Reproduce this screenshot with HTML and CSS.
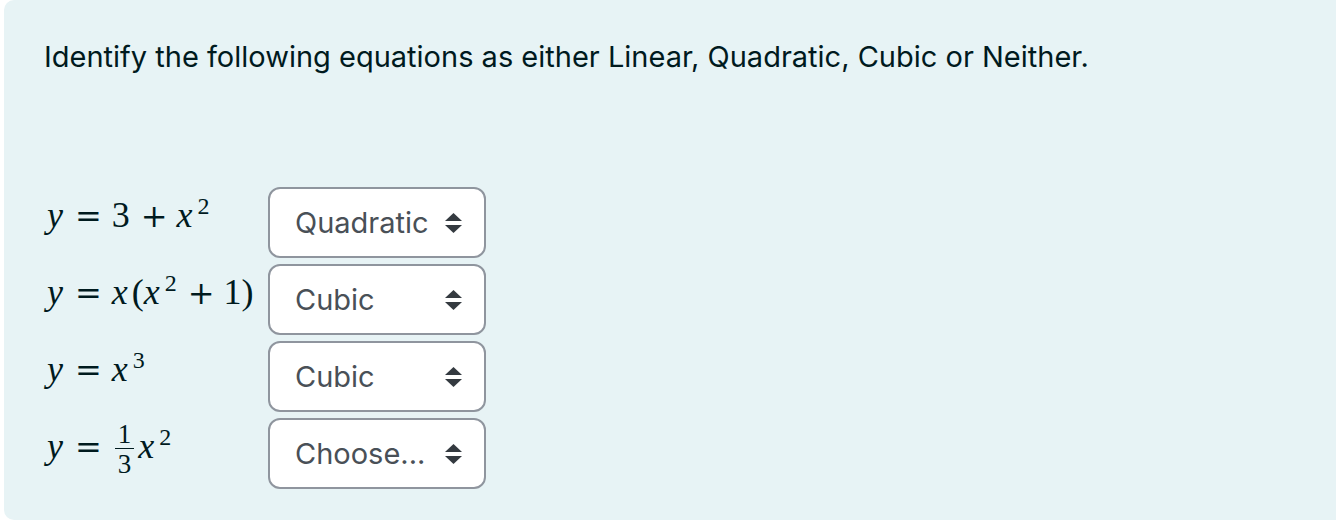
FILE: index.html
```html
<!DOCTYPE html>
<html lang="en">
<head>
    <meta charset="UTF-8">
    <meta name="viewport" content="width=device-width, initial-scale=1.0">
    <title>Question</title>
    <link rel="stylesheet" href="styles.css">
</head>
<body>
    <div class="formulation">
        <p class="qtext">Identify the following equations as either Linear, Quadratic, Cubic or Neither.</p>

        <div class="answers">
            <div class="row">
                <div class="eq">
                    <span class="mi">y</span><span class="mo rel">=</span><span class="mn">3</span><span class="mo bin">+</span><span class="mi">x</span><sup class="sup">2</sup>
                </div>
                <div class="select-wrap">
                    <select class="custom-select">
                        <option>Choose...</option>
                        <option>Linear</option>
                        <option selected>Quadratic</option>
                        <option>Cubic</option>
                        <option>Neither</option>
                    </select>
                    <svg class="caret" width="17" height="20" viewBox="0 0 17 20"><path d="M8.5 0 L17 8 H0 Z M0 12 H17 L8.5 20 Z" fill="#343a40"/></svg>
                </div>
            </div>

            <div class="row">
                <div class="eq">
                    <span class="mi">y</span><span class="mo rel">=</span><span class="mi">x</span><span class="mn">(</span><span class="mi">x</span><sup class="sup">2</sup><span class="mo bin">+</span><span class="mn">1)</span>
                </div>
                <div class="select-wrap">
                    <select class="custom-select">
                        <option>Choose...</option>
                        <option>Linear</option>
                        <option>Quadratic</option>
                        <option selected>Cubic</option>
                        <option>Neither</option>
                    </select>
                    <svg class="caret" width="17" height="20" viewBox="0 0 17 20"><path d="M8.5 0 L17 8 H0 Z M0 12 H17 L8.5 20 Z" fill="#343a40"/></svg>
                </div>
            </div>

            <div class="row">
                <div class="eq">
                    <span class="mi">y</span><span class="mo rel">=</span><span class="mi">x</span><sup class="sup">3</sup>
                </div>
                <div class="select-wrap">
                    <select class="custom-select">
                        <option>Choose...</option>
                        <option>Linear</option>
                        <option>Quadratic</option>
                        <option selected>Cubic</option>
                        <option>Neither</option>
                    </select>
                    <svg class="caret" width="17" height="20" viewBox="0 0 17 20"><path d="M8.5 0 L17 8 H0 Z M0 12 H17 L8.5 20 Z" fill="#343a40"/></svg>
                </div>
            </div>

            <div class="row">
                <div class="eq">
                    <span class="mi">y</span><span class="mo rel">=</span><span class="frac"><span class="num">1</span><span class="den">3</span></span><span class="mi">x</span><sup class="sup">2</sup>
                </div>
                <div class="select-wrap">
                    <select class="custom-select">
                        <option selected>Choose...</option>
                        <option>Linear</option>
                        <option>Quadratic</option>
                        <option>Cubic</option>
                        <option>Neither</option>
                    </select>
                    <svg class="caret" width="17" height="20" viewBox="0 0 17 20"><path d="M8.5 0 L17 8 H0 Z M0 12 H17 L8.5 20 Z" fill="#343a40"/></svg>
                </div>
            </div>
        </div>
    </div>
</body>
</html>
```

FILE: styles.css
```css
html, body {
    margin: 0;
    overflow: hidden;
    background: #fff;
}
body {
    font-family: Inter, "Noto Sans", sans-serif;
    color: #001a1e;
}
.formulation {
    margin-left: 4px;
    margin-right: -40px;
    height: 520px;
    box-sizing: border-box;
    padding: 0 40px;
    background-color: #e7f3f5;
    border-radius: 10px;
}
.qtext {
    margin: 0;
    padding-top: 37px;
    font-size: 29px;
    line-height: 40px;
}
.answers {
    margin-top: 110px;
}
.row {
    display: flex;
    align-items: center;
    height: 71px;
    margin-bottom: 6px;
}
.eq {
    width: 224px;
    height: 36px;
    margin-bottom: 16px;
    padding-left: 3px;
    box-sizing: border-box;
    font-family: "Liberation Serif", "DejaVu Serif", serif;
    font-size: 36px;
    line-height: 36px;
    white-space: nowrap;
    color: #001a1e;
}
.mi {
    font-style: italic;
    padding-right: 4px;
}
.mo {
    font-family: "DejaVu Serif", serif;
    font-size: 32px;
}
.mo.rel {
    margin: 0 10px 0 8px;
}
.mo.bin {
    margin: 0 9px 0 11px;
}
.sup {
    font-size: 24px;
    vertical-align: 13px;
    line-height: 0;
    margin-left: 1px;
}
.frac {
    display: inline-flex;
    flex-direction: column;
    align-items: stretch;
    vertical-align: middle;
    font-size: 27px;
    line-height: 22px;
    margin: -10px 4px -10px 3px;
    text-align: center;
}
.frac .num {
    border-bottom: 1.5px solid #001a1e;
    padding: 0 3px 3px;
}
.frac .den {
    padding-top: 4px;
}
.select-wrap {
    position: relative;
}
.custom-select {
    appearance: none;
    -webkit-appearance: none;
    width: 218px;
    height: 71px;
    padding: 0 50px 0 25px;
    font-family: Inter, "Noto Sans", sans-serif;
    font-size: 29px;
    color: #495057;
    background: #fff;
    border: 2px solid #8f959e;
    border-radius: 12px;
    outline: none;
}
.caret {
    position: absolute;
    left: 177px;
    top: 26px;
    pointer-events: none;
}
```
